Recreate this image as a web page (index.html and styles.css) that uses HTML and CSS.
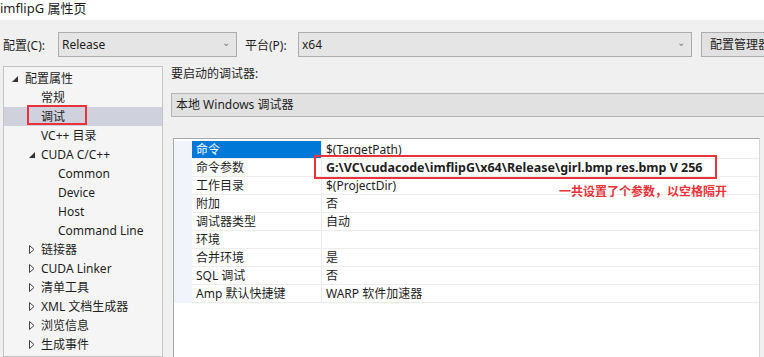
FILE: index.html
```html
<html>
    <head>
        <title>imflipG 属性页</title>
        <link rel="stylesheet" href="styles.css">
    </head>
    <body>
        <div class="title">imflipG 属性页</div>
        <div class="toolbar">
            <span class="label first">配置(C):</span>
            <div class="select configSelect"><span>Release</span><span class="chev">&#8964;</span></div>
            <span class="label">平台(P):</span>
            <div class="select platformSelect"><span>x64</span><span class="chev">&#8964;</span></div>
            <div class="button">配置管理器...</div>
        </div>
        <div class="main">
            <div class="tree">
                <div class="node lvl1"><svg class="arrow" width="6" height="6"><polygon points="6,0 6,6 0,6" fill="#333"/></svg>配置属性</div>
                <div class="node lvl2">常规</div>
                <div class="node lvl2 selected">调试</div>
                <div class="node lvl2">VC++ 目录</div>
                <div class="node lvl2 hasArrow open"><svg class="arrow" width="6" height="6"><polygon points="6,0 6,6 0,6" fill="#333"/></svg>CUDA C/C++</div>
                <div class="node lvl3">Common</div>
                <div class="node lvl3">Device</div>
                <div class="node lvl3">Host</div>
                <div class="node lvl3">Command Line</div>
                <div class="node lvl2 hasArrow"><svg class="arrow" width="6" height="9"><polygon points="0.5,0.5 5,4.5 0.5,8.5" fill="none" stroke="#444"/></svg>链接器</div>
                <div class="node lvl2 hasArrow"><svg class="arrow" width="6" height="9"><polygon points="0.5,0.5 5,4.5 0.5,8.5" fill="none" stroke="#444"/></svg>CUDA Linker</div>
                <div class="node lvl2 hasArrow"><svg class="arrow" width="6" height="9"><polygon points="0.5,0.5 5,4.5 0.5,8.5" fill="none" stroke="#444"/></svg>清单工具</div>
                <div class="node lvl2 hasArrow"><svg class="arrow" width="6" height="9"><polygon points="0.5,0.5 5,4.5 0.5,8.5" fill="none" stroke="#444"/></svg>XML 文档生成器</div>
                <div class="node lvl2 hasArrow"><svg class="arrow" width="6" height="9"><polygon points="0.5,0.5 5,4.5 0.5,8.5" fill="none" stroke="#444"/></svg>浏览信息</div>
                <div class="node lvl2 hasArrow"><svg class="arrow" width="6" height="9"><polygon points="0.5,0.5 5,4.5 0.5,8.5" fill="none" stroke="#444"/></svg>生成事件</div>
            </div>
            <div class="content">
                <div class="caption">要启动的调试器:</div>
                <div class="debugger">本地 Windows 调试器</div>
                <div class="grid">
                    <div class="row active"><div class="strip"></div><div class="name">命令</div><div class="value">$(TargetPath)</div></div>
                    <div class="row"><div class="strip"></div><div class="name">命令参数</div><div class="value args"><b>G:\VC\cudacode\imflipG\x64\Release\girl.bmp res.bmp V 256</b><span class="argsBox"></span></div></div>
                    <div class="row"><div class="strip"></div><div class="name">工作目录</div><div class="value">$(ProjectDir)</div></div>
                    <div class="row"><div class="strip"></div><div class="name">附加</div><div class="value">否</div></div>
                    <div class="row"><div class="strip"></div><div class="name">调试器类型</div><div class="value">自动</div></div>
                    <div class="row"><div class="strip"></div><div class="name">环境</div><div class="value"></div></div>
                    <div class="row"><div class="strip"></div><div class="name">合并环境</div><div class="value">是</div></div>
                    <div class="row"><div class="strip"></div><div class="name">SQL 调试</div><div class="value">否</div></div>
                    <div class="row"><div class="strip"></div><div class="name">Amp 默认快捷键</div><div class="value">WARP 软件加速器</div></div>
                    <div class="note">一共设置了个参数，以空格隔开</div>
                </div>
            </div>
        </div>
    </body>
</html>
```

FILE: styles.css
```css
body {
    margin: 0;
    width: 764px;
    height: 357px;
    overflow: hidden;
    background-color: #f0f0f0;
    font-family: "Noto Sans", "Noto Sans CJK SC", sans-serif;
    font-size: 12px;
    color: #1e1e1e;
}
.title {
    height: 20px;
    line-height: 17px;
    font-size: 13px;
    background-color: #ffffff;
    white-space: nowrap;
}
.toolbar {
    display: flex;
    align-items: center;
    margin-top: 12px;
    height: 25px;
    white-space: nowrap;
}
.toolbar > * {
    flex-shrink: 0;
}
.label {
    margin-left: 8px;
    width: 53px;
}
.label.first {
    margin-left: 3px;
    width: 55px;
}
.select {
    display: flex;
    justify-content: space-between;
    align-items: center;
    box-sizing: border-box;
    height: 25px;
    background-color: #e5e5e5;
    border: 1px solid #acacac;
    padding: 0 6px 0 3px;
}
.configSelect {
    width: 179px;
}
.platformSelect {
    width: 394px;
}
.chev {
    color: #808080;
    font-size: 10px;
    line-height: 12px;
    margin-top: -6px;
}
.button {
    box-sizing: border-box;
    margin-left: 9px;
    height: 25px;
    line-height: 23px;
    padding-left: 8px;
    width: 90px;
    background-color: #e1e1e1;
    border: 1px solid #adadad;
}
.main {
    display: flex;
    margin-top: 9px;
}
.tree {
    flex-shrink: 0;
    box-sizing: border-box;
    margin-left: 3px;
    width: 160px;
    height: 291px;
    padding-top: 2px;
    background-color: #f5f5f5;
    border: 1px solid #c4c4c4;
    white-space: nowrap;
}
.node {
    position: relative;
    height: 19px;
    line-height: 19px;
}
.lvl1 {
    padding-left: 21px;
}
.lvl2 {
    padding-left: 37px;
}
.lvl3 {
    padding-left: 54px;
}
.arrow {
    position: absolute;
    top: 7px;
}
.lvl1 .arrow {
    left: 8px;
}
.hasArrow .arrow {
    left: 25px;
    top: 5px;
}
.hasArrow.open .arrow {
    top: 7px;
}
.selected {
    background-color: #cfd1dc;
}
.selected:after {
    content: "";
    position: absolute;
    box-sizing: border-box;
    left: 23px;
    top: -2px;
    width: 60px;
    height: 20px;
    border: 2px solid #e8333a;
}
.content {
    margin-left: 8px;
    flex: 1;
    min-width: 0;
    height: 291px;
    overflow: hidden;
}
.caption {
    height: 16px;
    line-height: 16px;
}
.debugger {
    box-sizing: border-box;
    margin-top: 11px;
    height: 24px;
    line-height: 22px;
    padding-left: 4px;
    width: 600px;
    background-color: #e1e1e1;
    border: 1px solid #b4b4b4;
    white-space: nowrap;
}
.grid {
    position: relative;
    box-sizing: border-box;
    margin-top: 21px;
    margin-left: 2px;
    width: 587px;
    height: 219px;
    padding-top: 2px;
    background-color: #ffffff;
    border-top: 1px solid #a9a9a9;
    border-left: 1px solid #a9a9a9;
    border-right: 1px solid #d8d8d8;
    white-space: nowrap;
}
.row {
    display: flex;
    height: 18px;
    line-height: 17px;
}
.strip {
    width: 18px;
    background-color: #f1f5fb;
}
.name {
    box-sizing: border-box;
    width: 130px;
    padding-left: 4px;
    border-bottom: 1px solid #ececec;
    border-right: 1px solid #ececec;
}
.value {
    position: relative;
    flex: 1;
    padding-left: 4px;
    border-bottom: 1px solid #ececec;
}
.active .name {
    background-color: #0078d7;
    color: #ffffff;
}
.args b {
    font-size: 12.5px;
    font-weight: bold;
}
.argsBox {
    position: absolute;
    box-sizing: border-box;
    left: -8px;
    top: -4px;
    width: 403px;
    height: 24px;
    border: 2px solid #e8333a;
}
.note {
    position: absolute;
    left: 385px;
    top: 45px;
    color: #e8333a;
    font-weight: bold;
    font-size: 12px;
    line-height: 16px;
}
```
